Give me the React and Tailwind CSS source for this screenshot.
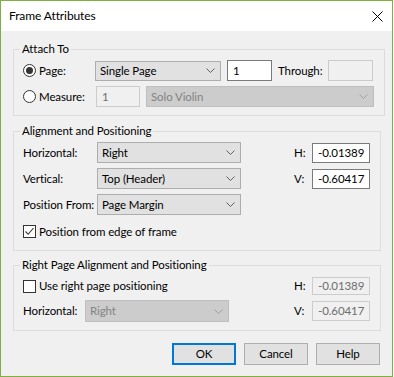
import React from 'react';

const font = { fontFamily: 'Lato, "Noto Sans", sans-serif' };

const Chevron = ({ color = '#606060' }) => (
    <svg width="9" height="5" viewBox="0 0 9 5" className="shrink-0">
        <path d="M0.5 0.5 L4.5 4.5 L8.5 0.5" fill="none" stroke={color} strokeWidth="1" />
    </svg>
);

// Windows-style combo box
const Select = ({ value, width, disabled = false, h = 'h-[21px]' }) => (
    <div
        className={`${width} ${h} flex items-center justify-between pl-[4px] pr-[5px] border whitespace-nowrap ${
            disabled ? 'bg-[#cccccc] border-[#bfbfbf] text-[#838383]' : 'bg-[#e1e1e1] border-[#adadad] text-black'
        }`}
    >
        <span>{value}</span>
        <Chevron color={disabled ? '#a0a0a0' : '#606060'} />
    </div>
);

const Input = ({ value, width, disabled = false, h = 'h-[21px]' }) => (
    <div
        className={`${width} ${h} flex items-center px-[5px] border ${
            disabled ? 'bg-[#f0f0f0] border-[#cccccc] text-[#6d6d6d]' : 'bg-white border-[#7a7a7a] text-black'
        }`}
    >
        {value}
    </div>
);

const Radio = ({ checked }) => (
    <span className="w-[13px] h-[13px] rounded-full border border-[#333333] bg-white flex items-center justify-center shrink-0">
        {checked && <span className="w-[7px] h-[7px] rounded-full bg-[#333333]" />}
    </span>
);

const Checkbox = ({ checked }) => (
    <span className="w-[13px] h-[13px] border border-[#333333] bg-white flex items-center justify-center shrink-0">
        {checked && (
            <svg width="11" height="11" viewBox="0 0 11 11">
                <path d="M1.5 5.5 L4.2 8.3 L9.5 2" fill="none" stroke="#333333" strokeWidth="1.1" />
            </svg>
        )}
    </span>
);

const Group = ({ title, className = '', children }) => (
    <fieldset className={`ml-[12px] mr-[11px] border border-[#dcdcdc] pl-[9px] pr-[10px] ${className}`}>
        <legend className="-ml-[3px] px-[2px] leading-[16px]">{title}</legend>
        {children}
    </fieldset>
);

const Button = ({ label, primary = false }) => (
    <div
        className={`w-[64px] h-[22px] flex items-center justify-center bg-[#e1e1e1] ${
            primary ? 'border-2 border-[#0078d7]' : 'border border-[#adadad]'
        }`}
    >
        {label}
    </div>
);

export default function App() {
    return (
        <div
            className="w-[393px] h-[377px] border border-[#7cb13f] bg-[#f0f0f0] flex flex-col text-[11.5px] tracking-[-0.1px] text-[#000] whitespace-nowrap"
            style={font}
        >
            {/* Title bar */}
            <div className="h-[30px] bg-white flex items-center justify-between pl-[8px] pr-[9px] shrink-0">
                <span className="text-[12px]">Frame Attributes</span>
                <svg width="11" height="11" viewBox="0 0 11 11">
                    <path d="M0.5 0.5 L10.5 10.5 M10.5 0.5 L0.5 10.5" stroke="#000" strokeWidth="1" />
                </svg>
            </div>

            {/* Attach To */}
            <Group title="Attach To" className="mt-[10px] pt-[3px] pb-[8px]">
                <div className="flex items-center h-[21px]">
                    <div className="w-[72px] flex items-center gap-[3px]">
                        <Radio checked />
                        <span>Page:</span>
                    </div>
                    <Select value="Single Page" width="w-[126px]" h="h-[20px]" />
                    <div className="ml-[6px]">
                        <Input value="1" width="w-[45px]" />
                    </div>
                    <span className="ml-[6px] w-[50px]">Through:</span>
                    <Input value="" width="w-[45px]" disabled />
                </div>
                <div className="flex items-center h-[21px] mt-[5px]">
                    <div className="w-[73px] flex items-center gap-[3px]">
                        <Radio />
                        <span>Measure:</span>
                    </div>
                    <Input value="1" width="w-[44px]" disabled />
                    <div className="ml-[6px]">
                        <Select value="Solo Violin" width="w-[228px]" disabled />
                    </div>
                </div>
            </Group>

            {/* Alignment and Positioning */}
            <Group title="Alignment and Positioning" className="mt-[7px] pt-[3px] pb-[11px]">
                <div className="flex items-center justify-between h-[21px]">
                    <div className="flex items-center">
                        <span className="w-[74px]">Horizontal:</span>
                        <Select value="Right" width="w-[144px]" />
                    </div>
                    <div className="flex items-center">
                        <span className="w-[18px]">H:</span>
                        <Input value="-0.01389" width="w-[58px]" h="h-[20px]" />
                    </div>
                </div>
                <div className="flex items-center justify-between h-[21px] mt-[5px]">
                    <div className="flex items-center">
                        <span className="w-[74px]">Vertical:</span>
                        <Select value="Top (Header)" width="w-[144px]" />
                    </div>
                    <div className="flex items-center">
                        <span className="w-[18px]">V:</span>
                        <Input value="-0.60417" width="w-[58px]" h="h-[20px]" />
                    </div>
                </div>
                <div className="flex items-center h-[21px] mt-[5px]">
                    <span className="w-[74px]">Position From:</span>
                    <Select value="Page Margin" width="w-[144px]" />
                </div>
                <div className="flex items-center gap-[3px] h-[15px] mt-[9px]">
                    <Checkbox checked />
                    <span>Position from edge of frame</span>
                </div>
            </Group>

            {/* Right Page Alignment and Positioning */}
            <Group title="Right Page Alignment and Positioning" className="mt-[6px] pt-[4px] pb-[8px]">
                <div className="flex items-center justify-between h-[18px]">
                    <div className="flex items-center gap-[3px]">
                        <Checkbox />
                        <span>Use right page positioning</span>
                    </div>
                    <div className="flex items-center">
                        <span className="w-[18px]">H:</span>
                        <Input value="-0.01389" width="w-[58px]" h="h-[18px]" disabled />
                    </div>
                </div>
                <div className="flex items-center justify-between h-[22px] mt-[5px]">
                    <div className="flex items-center">
                        <span className="w-[62px]">Horizontal:</span>
                        <Select value="Right" width="w-[144px]" h="h-[22px]" disabled />
                    </div>
                    <div className="flex items-center">
                        <span className="w-[18px]">V:</span>
                        <Input value="-0.60417" width="w-[58px]" h="h-[20px]" disabled />
                    </div>
                </div>
            </Group>

            {/* Buttons */}
            <div className="flex justify-end gap-[8px] mt-[12px] pr-[12px]">
                <Button label="OK" primary />
                <Button label="Cancel" />
                <Button label="Help" />
            </div>
        </div>
    );
}
